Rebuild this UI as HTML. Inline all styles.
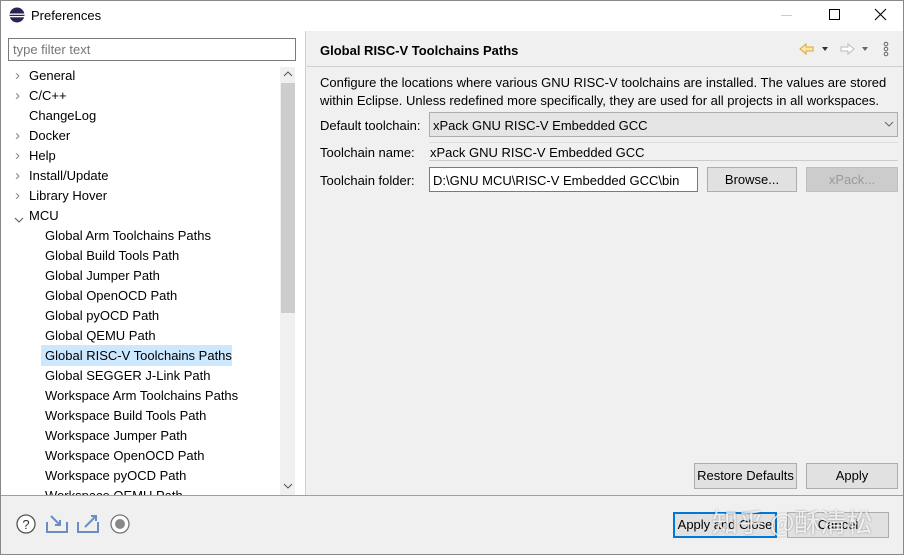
<!DOCTYPE html>
<html><head><meta charset="utf-8"><style>
*{margin:0;padding:0;box-sizing:border-box}
body{width:904px;height:555px;overflow:hidden;background:#f0f0f0;font-family:"Liberation Sans","Noto Sans CJK SC",sans-serif;font-size:13px;color:#000;position:relative}
.abs{position:absolute}
.frame{position:absolute;left:0;top:0;width:904px;height:555px;border:1px solid #888;pointer-events:none}
.title{left:0;top:0;width:904px;height:31px;background:#fff}
.left{left:1px;top:31px;width:305px;height:464px;background:#fff;border-right:1px solid #d0d0d0}
.tree div{position:absolute;white-space:nowrap;font-size:13px}
.tree .ch{color:#888;font-size:15px;line-height:14px}
.btn{position:absolute;background:#e1e1e1;border:1px solid #adadad;text-align:center;line-height:24px;font-size:13px}
</style></head><body>
<div class="abs title"></div>
<svg class="abs" style="left:9px;top:7px" width="16" height="16"><circle cx="8" cy="8" r="7.5" fill="#2c2255"/><rect x="0" y="6.5" width="16" height="1.3" fill="#fff"/><rect x="0" y="9" width="16" height="1.3" fill="#fff"/></svg>
<div class="abs" style="left:31px;top:8px;font-size:13px">Preferences</div>
<div class="abs" style="left:781px;top:15px;width:11px;height:1px;background:#ccc"></div>
<div class="abs" style="left:829px;top:9px;width:11px;height:11px;border:1px solid #000"></div>
<svg class="abs" style="left:874px;top:8px" width="13" height="13"><path d="M1 1L12 12M12 1L1 12" stroke="#000" stroke-width="1.1"/></svg>

<div class="abs left"></div>
<div class="abs" style="left:8px;top:38px;width:288px;height:23px;border:1px solid #7a7a7a;background:#fff;color:#777;padding:3px 4px;font-size:13px">type filter text</div>
<div class="abs" style="left:280px;top:67px;width:15px;height:428px;background:#f0f0f0"></div>
<div class="abs" style="left:281px;top:83px;width:14px;height:230px;background:#cdcdcd"></div>
<svg class="abs" style="left:283px;top:71px" width="10" height="7"><path d="M1 5L5 1L9 5" stroke="#555" fill="none"/></svg>
<svg class="abs" style="left:283px;top:483px" width="10" height="7"><path d="M1 1L5 5L9 1" stroke="#555" fill="none"/></svg>
<div class="tree">
<div class="ch" style="left:15px;top:69px">›</div><div style="left:29px;top:68px">General</div>
<div class="ch" style="left:15px;top:89px">›</div><div style="left:29px;top:88px">C/C++</div>
<div style="left:29px;top:108px">ChangeLog</div>
<div class="ch" style="left:15px;top:129px">›</div><div style="left:29px;top:128px">Docker</div>
<div class="ch" style="left:15px;top:149px">›</div><div style="left:29px;top:148px">Help</div>
<div class="ch" style="left:15px;top:169px">›</div><div style="left:29px;top:168px">Install/Update</div>
<div class="ch" style="left:15px;top:189px">›</div><div style="left:29px;top:188px">Library Hover</div>
<div style="left:14px;top:212px"><svg width="10" height="7"><path d="M1 1L5 5L9 1" stroke="#555" fill="none"/></svg></div><div style="left:29px;top:208px">MCU</div>
<div style="left:41px;top:345px;width:191px;height:21px;background:#cce8ff"></div>
<div style="left:45px;top:228px">Global Arm Toolchains Paths</div>
<div style="left:45px;top:248px">Global Build Tools Path</div>
<div style="left:45px;top:268px">Global Jumper Path</div>
<div style="left:45px;top:288px">Global OpenOCD Path</div>
<div style="left:45px;top:308px">Global pyOCD Path</div>
<div style="left:45px;top:328px">Global QEMU Path</div>
<div style="left:45px;top:348px">Global RISC-V Toolchains Paths</div>
<div style="left:45px;top:368px">Global SEGGER J-Link Path</div>
<div style="left:45px;top:388px">Workspace Arm Toolchains Paths</div>
<div style="left:45px;top:408px">Workspace Build Tools Path</div>
<div style="left:45px;top:428px">Workspace Jumper Path</div>
<div style="left:45px;top:448px">Workspace OpenOCD Path</div>
<div style="left:45px;top:468px">Workspace pyOCD Path</div>
<div style="left:45px;top:488px;height:7px;overflow:hidden">Workspace QEMU Path</div>
</div>

<div class="abs" style="left:307px;top:66px;width:597px;height:1px;background:#d0d0d0"></div>
<div class="abs" style="left:320px;top:43px;font-weight:bold;font-size:13px">Global RISC-V Toolchains Paths</div>
<svg class="abs" style="left:798px;top:41px" width="95" height="16"><path d="M2 8L8 3V6H15V10H8V13Z" fill="#fbe7a8" stroke="#d8a93c"/><path d="M24 6L30 6L27 10Z" fill="#333"/><path d="M56 8L50 3V6H43V10H50V13Z" fill="#fff" stroke="#bbb"/><path d="M64 6L70 6L67 10Z" fill="#666"/><circle cx="88" cy="3" r="1.8" fill="none" stroke="#666"/><circle cx="88" cy="8" r="1.8" fill="none" stroke="#666"/><circle cx="88" cy="13" r="1.8" fill="none" stroke="#666"/></svg>
<div class="abs" style="left:320px;top:74px;line-height:18px;width:580px">Configure the locations where various GNU RISC-V toolchains are installed. The values are stored<br>within Eclipse. Unless redefined more specifically, they are used for all projects in all workspaces.</div>
<div class="abs" style="left:320px;top:118px">Default toolchain:</div>
<div class="abs" style="left:429px;top:112px;width:469px;height:25px;background:#e5e5e5;border:1px solid #acacac;padding:5px 3px">xPack GNU RISC-V Embedded GCC</div>
<svg class="abs" style="left:884px;top:121px" width="10" height="7"><path d="M1 1L5 5L9 1" stroke="#666" fill="none"/></svg>
<div class="abs" style="left:320px;top:145px">Toolchain name:</div>
<div class="abs" style="left:429px;top:142px;width:469px;height:19px;border-bottom:1px solid #ccc;border-top:1px solid #ddd;padding:2px 1px">xPack GNU RISC-V Embedded GCC</div>
<div class="abs" style="left:320px;top:173px">Toolchain folder:</div>
<div class="abs" style="left:429px;top:167px;width:269px;height:25px;background:#fff;border:1px solid #7a7a7a;padding:5px 3px">D:\GNU MCU\RISC-V Embedded GCC\bin</div>
<div class="btn" style="left:707px;top:167px;width:90px;height:25px">Browse...</div>
<div class="btn" style="left:806px;top:167px;width:92px;height:25px;background:#ccc;border-color:#bfbfbf;color:#999">xPack...</div>
<div class="btn" style="left:694px;top:463px;width:103px;height:26px">Restore Defaults</div>
<div class="btn" style="left:806px;top:463px;width:92px;height:26px">Apply</div>

<div class="abs" style="left:0;top:495px;width:904px;height:1px;background:#a0a0a0"></div>
<svg class="abs" style="left:16px;top:513px" width="120" height="22"><circle cx="10" cy="11" r="9" fill="#fff" stroke="#555" stroke-width="1.3"/><text x="10" y="16" font-size="13" text-anchor="middle" fill="#333" font-family="Liberation Sans">?</text><path d="M31 9V19H51V9" fill="none" stroke="#6a8fbf" stroke-width="2"/><path d="M35 3L44 12M44 7V12H39" fill="none" stroke="#6a8fbf" stroke-width="2"/><path d="M62 9V19H82V9" fill="none" stroke="#6a8fbf" stroke-width="2"/><path d="M69 14L80 3M75 3H80V8" fill="none" stroke="#6a8fbf" stroke-width="2"/><circle cx="104" cy="11" r="9" fill="#fff" stroke="#777" stroke-width="1.3"/><circle cx="104" cy="11" r="5" fill="#888"/></svg>
<div class="btn" style="left:673px;top:512px;width:104px;height:26px;border:2px solid #0078d7;line-height:22px">Apply and Close</div>
<div class="btn" style="left:787px;top:512px;width:102px;height:26px">Cancel</div>
<div class="abs" style="left:712px;top:503px;font-size:26px;color:rgba(255,255,255,0.8);text-shadow:0 0 2px rgba(0,0,0,0.35);font-family:'Noto Sans CJK SC',sans-serif">知乎 @酥清松</div>
<div class="frame"></div>
</body></html>
